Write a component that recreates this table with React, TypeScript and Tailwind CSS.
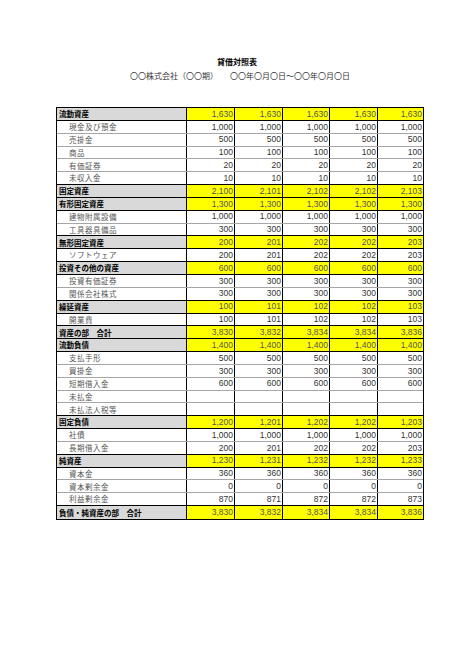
const same = (n: number) => [n, n, n, n, n];

type Row = { label: string; group?: boolean; values: (number | null)[] };

const rows: Row[] = [
  { label: "流動資産", group: true, values: same(1630) },
  { label: "現金及び預金", values: same(1000) },
  { label: "売掛金", values: same(500) },
  { label: "商品", values: same(100) },
  { label: "有価証券", values: same(20) },
  { label: "未収入金", values: same(10) },
  { label: "固定資産", group: true, values: [2100, 2101, 2102, 2102, 2103] },
  { label: "有形固定資産", group: true, values: same(1300) },
  { label: "建物附属設備", values: same(1000) },
  { label: "工具器具備品", values: same(300) },
  { label: "無形固定資産", group: true, values: [200, 201, 202, 202, 203] },
  { label: "ソフトウェア", values: [200, 201, 202, 202, 203] },
  { label: "投資その他の資産", group: true, values: same(600) },
  { label: "投資有価証券", values: same(300) },
  { label: "関係会社株式", values: same(300) },
  { label: "繰延資産", group: true, values: [100, 101, 102, 102, 103] },
  { label: "開業費", values: [100, 101, 102, 102, 103] },
  { label: "資産の部　合計", group: true, values: [3830, 3832, 3834, 3834, 3836] },
  { label: "流動負債", group: true, values: same(1400) },
  { label: "支払手形", values: same(500) },
  { label: "買掛金", values: same(300) },
  { label: "短期借入金", values: same(600) },
  { label: "未払金", values: [null, null, null, null, null] },
  { label: "未払法人税等", values: [null, null, null, null, null] },
  { label: "固定負債", group: true, values: [1200, 1201, 1202, 1202, 1203] },
  { label: "社債", values: same(1000) },
  { label: "長期借入金", values: [200, 201, 202, 202, 203] },
  { label: "純資産", group: true, values: [1230, 1231, 1232, 1232, 1233] },
  { label: "資本金", values: same(360) },
  { label: "資本剰余金", values: same(0) },
  { label: "利益剰余金", values: [870, 871, 872, 872, 873] },
  { label: "負債・純資産の部　合計", group: true, values: [3830, 3832, 3834, 3834, 3836] },
];

const fmt = (n: number | null) => (n === null ? "" : n.toLocaleString("en-US"));

const App = () => {
  return (
    <div className="w-[474px] h-[670px] bg-white text-black font-['Noto_Sans_CJK_JP',sans-serif]">
      <div className="pt-[56px] flex flex-col items-center">
        <h1 className="text-[8px] font-bold leading-[11px]">貸借対照表</h1>
        <p className="mt-[3px] ml-[6px] text-[8px] leading-[11px] text-[#333] whitespace-pre">
          〇〇株式会社（〇〇期）　　〇〇年〇月〇日～〇〇年〇月〇日
        </p>
      </div>

      <div className="mt-[26px] ml-[56px] w-[368px] border-[1.5px] border-black">
        {rows.map((row, i) => {
          const next = rows[i + 1];
          const last = i === rows.length - 1;
          const dark = row.group || (next && next.group);
          return (
            <div
              key={i}
              className={`grid grid-cols-[130px_48px_48px_47px_48px_1fr] h-[12.85px] ${
                last ? "" : dark ? "border-b border-black" : "border-b border-[#a6a6a6]"
              }`}
            >
              <div
                className={`flex items-center border-r border-black text-[7.5px] leading-none whitespace-pre ${
                  row.group
                    ? "bg-[#d9d9d9] font-bold pl-[2px] text-black"
                    : "pl-[12px] text-[#555] tracking-[0.5px]"
                }`}
              >
                {row.label}
              </div>
              {row.values.map((v, j) => (
                <div
                  key={j}
                  className={`flex items-center justify-end pr-[1px] text-[8.5px] leading-none font-['Liberation_Sans',sans-serif] ${
                    j < 4 ? "border-r border-black" : ""
                  } ${row.group ? "bg-[#ffff00] text-[#555]" : "text-[#333]"}`}
                >
                  {fmt(v)}
                </div>
              ))}
            </div>
          );
        })}
      </div>
    </div>
  );
};

export default App;
